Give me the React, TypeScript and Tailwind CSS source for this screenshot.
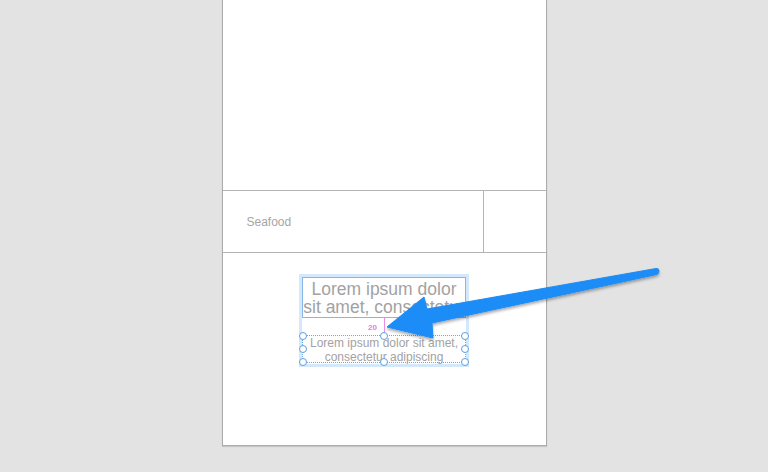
import React from "react";

const handles = [
  "left-0 top-0",
  "left-1/2 top-0",
  "left-full top-0",
  "left-0 top-1/2",
  "left-full top-1/2",
  "left-0 top-full",
  "left-1/2 top-full",
  "left-full top-full",
];

export default function App() {
  return (
    <div
      className="relative w-full h-[472px] bg-[#e3e3e3] flex justify-center overflow-hidden"
      style={{ fontFamily: '"Liberation Sans", Arial, sans-serif' }}
    >
      <div className="w-[325px] h-[446px] bg-white border-x border-b border-[#ababab] shadow-[0_1px_1px_rgba(0,0,0,0.12)] flex flex-col">
        <div className="h-[190px] shrink-0" />
        <div className="h-[63px] shrink-0 border-y border-[#b4b4b4] flex">
          <div className="w-[261px] border-r border-[#b4b4b4] flex items-center pl-[24px] text-[12px] text-[#a6a6a6]">
            Seafood
          </div>
          <div className="flex-1" />
        </div>
        <div className="flex-1 flex justify-center pt-[21px]">
          <div className="relative w-[170px] h-[93px] border-[3px] border-[#d4e8fb] flex flex-col">
            <div className="h-[41px] border border-[#86b5ea] overflow-hidden text-center text-[17.5px] leading-[18px] text-[#a2a2a2] pt-[2px]">
              Lorem ipsum dolor sit amet, consectetur
            </div>
            <div className="relative h-[17px]">
              <span className="absolute left-[66px] top-[5px] text-[8px] leading-[9px] font-semibold text-[#e77de7]">
                20
              </span>
              <span className="absolute left-[82px] top-0 w-px h-[16px] bg-[#e98de9]" />
            </div>
            <div className="relative h-[28px] border border-dotted border-[#6aa8e8] text-center text-[12px] leading-[14px] text-[#a2a2a2]">
              Lorem ipsum dolor sit amet,
              <br />
              consectetur adipiscing
              {handles.map((h) => (
                <span
                  key={h}
                  className={`absolute ${h} w-[8px] h-[8px] -translate-x-1/2 -translate-y-1/2 rounded-full border border-[#5d9fe4] bg-white`}
                />
              ))}
            </div>
          </div>
        </div>
      </div>
      <svg
        className="absolute inset-0 pointer-events-none"
        width="768"
        height="472"
        viewBox="0 0 768 472"
      >
        <defs>
          <filter id="sh" x="-10%" y="-30%" width="120%" height="160%">
            <feDropShadow dx="0" dy="2" stdDeviation="1.5" floodColor="#000" floodOpacity="0.35" />
          </filter>
        </defs>
        <path
          d="M387 327 L424 297 L427 309 L656 268.5 Q659 268 659 271 Q659 274 656.5 274.5 L432 323 L433 338 Z"
          fill="#1d8cf6"
          stroke="#1d8cf6"
          strokeWidth="1"
          strokeLinejoin="round"
          filter="url(#sh)"
        />
      </svg>
    </div>
  );
}
